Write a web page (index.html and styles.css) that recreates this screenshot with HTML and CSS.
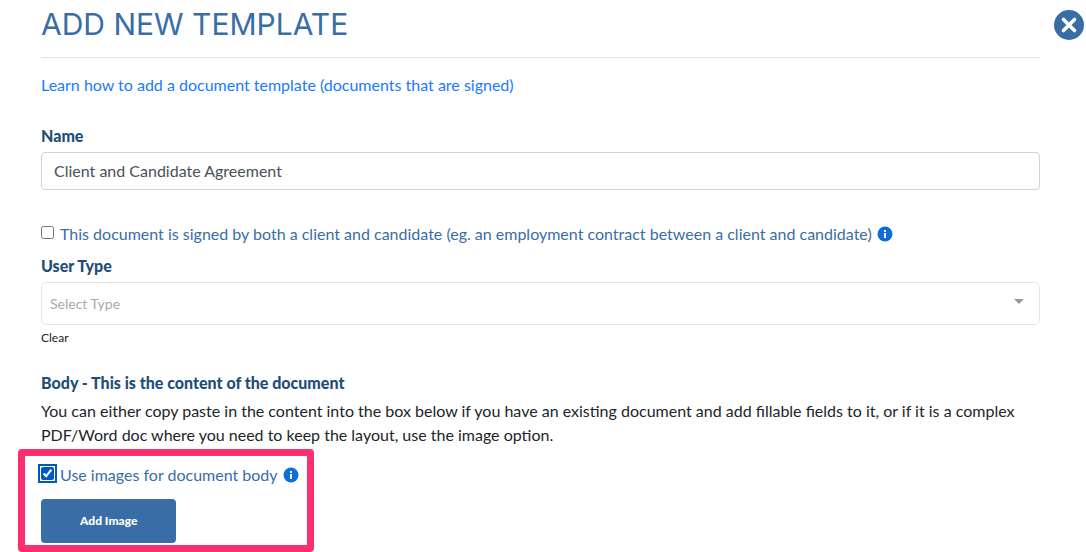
FILE: index.html
```html
<!DOCTYPE html>
<html lang="en">
<head>
    <meta charset="UTF-8">
    <meta name="viewport" content="width=device-width, initial-scale=1.0">
    <title>Add New Template</title>
    <link rel="stylesheet" href="styles.css">
</head>
<body>

<div class="page">
    <main class="content">
        <h1>ADD NEW TEMPLATE</h1>

        <a href="#" class="help-link">Learn how to add a document template (documents that are signed)</a>

        <form>
            <label class="field-label" for="templateName">Name</label>
            <input type="text" id="templateName" class="text-input" value="Client and Candidate Agreement">

            <div class="check-row both-signed">
                <input type="checkbox" id="bothSigned">
                <label for="bothSigned">This document is signed by both a client and candidate (eg. an employment contract between a client and candidate)</label>
                <svg class="info-icon" viewBox="0 0 16 16" aria-hidden="true">
                    <circle cx="8" cy="8" r="7.5" fill="#0d6edb"/>
                    <path d="M7 4h2v2H7zM7 7h2v5H7z" fill="#fff"/>
                </svg>
            </div>

            <label class="field-label" for="userType">User Type</label>
            <div class="select-wrap">
                <select id="userType" class="select-input">
                    <option>Select Type</option>
                </select>
                <span class="arrow"></span>
            </div>
            <button type="reset" class="clear-button">Clear</button>

            <h2 class="field-label">Body - This is the content of the document</h2>
            <p class="body-text">You can either copy paste in the content into the box below if you have an existing document and add fillable fields to it, or if it is a complex PDF/Word doc where you need to keep the layout, use the image option.</p>

            <div class="highlight">
                <div class="check-row">
                    <input type="checkbox" id="useImages" class="focused" checked>
                    <label for="useImages">Use images for document body</label>
                    <svg class="info-icon" viewBox="0 0 16 16" aria-hidden="true">
                        <circle cx="8" cy="8" r="7.5" fill="#0d6edb"/>
                        <path d="M7 4h2v2H7zM7 7h2v5H7z" fill="#fff"/>
                    </svg>
                </div>
                <button type="button" class="btn">Add Image</button>
            </div>
        </form>
    </main>

    <button type="button" class="close-button" aria-label="Close">
        <svg viewBox="0 0 30 30">
            <circle cx="15" cy="15" r="15" fill="#396da6"/>
            <path d="M9.5 9.5l11 11M20.5 9.5l-11 11" stroke="#fff" stroke-width="3.6" stroke-linecap="round"/>
        </svg>
    </button>
</div>

</body>
</html>
```
FILE: styles.css
```css
* {
    box-sizing: border-box;
}
body {
    margin: 0;
    background: white;
    color: #212529;
    font-family: Lato, sans-serif;
    font-size: 16px;
    line-height: 24px;
}
.page {
    display: grid;
    grid-template-columns: minmax(0, 1fr) 30px;
    column-gap: 14px;
    padding: 0 2px 0 41px;
}
h1 {
    margin: 0 0 15px;
    padding: 7px 0 16px;
    border-bottom: 1px solid #e3e3e3;
    color: #396da6;
    font-family: Inter, sans-serif;
    font-size: 30px;
    font-weight: 400;
    line-height: 34px;
}
.help-link {
    display: block;
    margin-bottom: 27px;
    color: #1a7aff;
    text-decoration: none;
}
.field-label {
    display: block;
    margin: 0 0 4px;
    color: #1f4e79;
    font-size: 16px;
    font-weight: 900;
}
.text-input {
    display: block;
    width: 100%;
    height: 38px;
    padding: 5px 12px 7px;
    border: 1px solid #ced4da;
    border-radius: 4px;
    color: #495057;
    font: inherit;
}
.check-row {
    display: flex;
    align-items: center;
    color: #396da6;
}
.check-row input {
    flex: none;
    width: 13px;
    height: 13px;
    margin: 0 6px 3px 0;
    accent-color: #0057c8;
}
.check-row .focused {
    outline: 2px solid #0057c8;
    outline-offset: 1px;
    border-radius: 2px;
}
.info-icon {
    flex: none;
    width: 16px;
    height: 16px;
    margin-left: 5px;
}
.both-signed {
    margin: 32px 0 8px;
}
.select-wrap {
    display: grid;
    align-items: center;
}
.select-input {
    grid-area: 1 / 1;
    width: 100%;
    height: 43px;
    padding: 0 8px;
    border: 1px solid #e4e5e7;
    border-radius: 5px;
    background: white;
    color: #aaa;
    font: inherit;
    font-size: 14px;
    appearance: none;
}
.arrow {
    grid-area: 1 / 1;
    justify-self: end;
    margin: 0 16px 4px 0;
    border: 5px solid transparent;
    border-top-color: #999;
    border-bottom: 0;
    pointer-events: none;
}
.clear-button {
    display: block;
    margin: 4px 0 24px;
    padding: 0;
    border: none;
    background: none;
    color: #212529;
    font: inherit;
    font-size: 12px;
    line-height: 18px;
    cursor: pointer;
}
.body-text {
    margin: 0 0 2px;
}
.highlight {
    width: fit-content;
    margin-left: -23px;
    padding: 7px 8px 2px 16px;
    border: 7px solid #ff2e6d;
    border-radius: 4px;
}
.btn {
    height: 44px;
    margin-top: 12px;
    padding: 0 39px;
    border: none;
    border-radius: 4px;
    background-color: #396da6;
    color: white;
    font: inherit;
    font-size: 12px;
    font-weight: 900;
    cursor: pointer;
    display: block;
}
.close-button {
    width: 30px;
    height: 30px;
    margin-top: 10px;
    padding: 0;
    border: none;
    background: none;
    cursor: pointer;
}
.close-button svg {
    display: block;
    fill: none;
}
```
